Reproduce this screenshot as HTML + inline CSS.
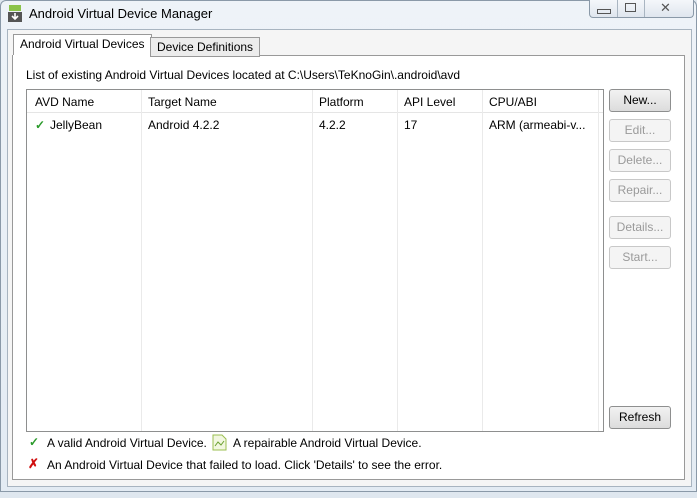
<!DOCTYPE html>
<html><head><style>
body{margin:0;width:697px;height:498px;overflow:hidden;background:#dfe7ef;font-family:"Liberation Sans",sans-serif;font-size:12px;color:#000;position:relative}
.a{position:absolute}
.frame{left:0;top:0;width:695px;height:490px;background:linear-gradient(#eef3f8,#e3ebf3);border:1px solid #8a99a8;border-radius:6px 6px 0 0}
.client{left:7px;top:29px;width:683px;height:456px;background:#f5f5f5;border:1px solid #a8b4c0}
.panel{left:12px;top:55px;width:671px;height:423px;background:#fff;border:1px solid #999}
.tab{height:19px;border:1px solid #999;border-bottom:none;line-height:19px;padding:0 6px;background:#fff}
.tbl{left:26px;top:89px;width:576px;height:341px;border:1px solid #8e8f8f;background:#fff}
.col{top:0;height:341px;border-left:1px solid #eaeaea}
.hdr{left:0;top:0;width:576px;height:22px;border-bottom:1px solid #e5e5e5;background:#fff}
.btn{left:609px;width:60px;height:21px;border:1px solid #8e8f8f;border-radius:3px;background:linear-gradient(#f2f2f2,#dcdcdc);text-align:center;line-height:21px;font-size:12px}
.dis{color:#9a9a9a;border-color:#c8c8c8;background:#f4f4f4}
</style></head><body>
<div class="a frame"></div>
<svg class="a" style="left:8px;top:5px" width="14" height="17"><rect x="1" y="0" width="12" height="6" fill="#8bc34a"/><rect x="0" y="7" width="14" height="10" fill="#555"/><path d="M7 8v6M4 11l3 3 3-3" stroke="#fff" stroke-width="1.6" fill="none"/></svg>
<div class="a" style="left:29px;top:6px;font-size:13px">Android Virtual Device Manager</div>
<div class="a" style="left:589px;top:0;width:103px;height:17px;border:1px solid #8a99a8;border-top:none;border-radius:0 0 4px 4px;background:linear-gradient(#f4f7fa,#dfe6ee)"></div>
<div class="a" style="left:617px;top:0;width:1px;height:17px;background:#a9b5c1"></div>
<div class="a" style="left:644px;top:0;width:1px;height:17px;background:#a9b5c1"></div>
<div class="a" style="left:597px;top:9px;width:12px;height:3px;border:1px solid #555"></div>
<div class="a" style="left:625px;top:3px;width:9px;height:7px;border:1px solid #555"></div>
<div class="a" style="left:660px;top:0px;font-size:13px;color:#555">✕</div>
<div class="a client"></div>
<div class="a panel"></div>
<div class="a tab" style="left:13px;top:34px;height:21px">Android Virtual Devices</div>
<div class="a tab" style="left:150px;top:37px;background:#ececec;height:18px;line-height:18px;border-bottom:1px solid #999">Device Definitions</div>
<div class="a" style="left:13px;top:55px;width:136px;height:1px;background:#fff"></div>
<div class="a" style="left:26px;top:68px">List of existing Android Virtual Devices located at C:\Users\TeKnoGin\.android\avd</div>
<div class="a tbl">
<div class="a hdr"></div>
<div class="a col" style="left:114px"></div><div class="a col" style="left:285px"></div><div class="a col" style="left:370px"></div><div class="a col" style="left:455px"></div><div class="a col" style="left:571px"></div>
<div class="a" style="left:8px;top:5px">AVD Name</div>
<div class="a" style="left:121px;top:5px">Target Name</div>
<div class="a" style="left:292px;top:5px">Platform</div>
<div class="a" style="left:377px;top:5px">API Level</div>
<div class="a" style="left:462px;top:5px">CPU/ABI</div>
<div class="a" style="left:8px;top:28px;color:#2a9a2a;font-weight:bold">✓</div>
<div class="a" style="left:23px;top:28px">JellyBean</div>
<div class="a" style="left:121px;top:28px">Android 4.2.2</div>
<div class="a" style="left:292px;top:28px">4.2.2</div>
<div class="a" style="left:377px;top:28px">17</div>
<div class="a" style="left:462px;top:28px">ARM (armeabi-v...</div>
</div>
<div class="a btn" style="top:89px">New...</div>
<div class="a btn dis" style="top:119px">Edit...</div>
<div class="a btn dis" style="top:149px">Delete...</div>
<div class="a btn dis" style="top:179px">Repair...</div>
<div class="a btn dis" style="top:216px">Details...</div>
<div class="a btn dis" style="top:246px">Start...</div>
<div class="a btn" style="top:406px">Refresh</div>
<div class="a" style="left:29px;top:435px;color:#2a9a2a;font-weight:bold">✓</div>
<div class="a" style="left:47px;top:436px">A valid Android Virtual Device.</div>
<svg class="a" style="left:212px;top:434px" width="15" height="17"><path d="M1 1h9l4 4v11H1z" fill="#f2f7e0" stroke="#9bbf50"/><path d="M3 12l3-4 3 3 3-4" stroke="#6aa030" fill="none"/></svg>
<div class="a" style="left:233px;top:436px">A repairable Android Virtual Device.</div>
<div class="a" style="left:28px;top:456px;color:#d01010;font-weight:bold;font-size:13px">✗</div>
<div class="a" style="left:47px;top:458px">An Android Virtual Device that failed to load. Click 'Details' to see the error.</div>
</body></html>
